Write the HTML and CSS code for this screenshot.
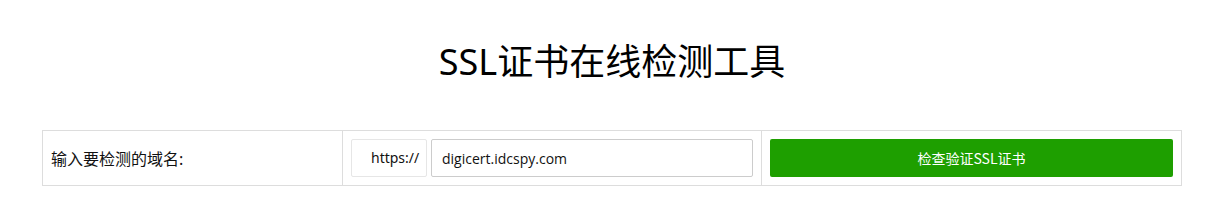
FILE: index.html
```html
<!DOCTYPE html>
<html lang="zh-CN">
<head>
    <meta charset="UTF-8">
    <title>SSL证书在线检测工具</title>
    <link rel="stylesheet" href="styles.css">
</head>
<body>
    <div class="container">
        <h1 class="title">SSL证书在线检测工具</h1>
        <table class="check-table">
            <tr>
                <td class="label-cell">输入要检测的域名:</td>
                <td class="input-cell">
                    <div class="input-group">
                        <span class="prefix">https://</span>
                        <input type="text" class="domain-input" value="digicert.idcspy.com">
                    </div>
                </td>
                <td class="btn-cell">
                    <button class="check-btn">检查验证SSL证书</button>
                </td>
            </tr>
        </table>
    </div>
</body>
</html>
```

FILE: styles.css
```css
body {
    margin: 0;
    padding-left: 14px;
    font-family: "Noto Sans", "Noto Sans CJK SC", sans-serif;
    font-size: 14px;
    color: #333;
    background: #fff;
}

.container {
    width: 1140px;
    margin: 0 auto;
}

.title {
    margin: 42px 0 48px;
    font-size: 36px;
    font-weight: normal;
    line-height: 40px;
    text-align: center;
    color: #000;
}

.check-table {
    width: 100%;
    border-collapse: collapse;
}

.check-table td {
    border: 1px solid #ddd;
    padding: 8px;
    height: 38px;
    vertical-align: middle;
}

.label-cell {
    width: 283px;
    font-size: 16px;
    color: #111;
}

.input-cell {
    width: 402px;
}

.input-group {
    display: flex;
    gap: 4px;
}

.prefix {
    box-sizing: border-box;
    width: 76px;
    height: 38px;
    line-height: 36px;
    border: 1px solid #e6e6e6;
    border-radius: 2px;
    padding: 0 9px 0 19px;
    color: #111;
}

.domain-input {
    box-sizing: border-box;
    flex: 1;
    height: 38px;
    border: 1px solid #ccc;
    border-radius: 2px;
    padding: 0 10px;
    font-family: "Open Sans", "Noto Sans CJK SC", sans-serif;
    font-size: 14px;
    color: #111;
    outline: none;
}

.check-btn {
    width: 100%;
    height: 38px;
    border: none;
    border-radius: 2px;
    background: #1e9f00;
    color: #fff;
    font-family: "Noto Sans CJK SC", sans-serif;
    font-size: 14px;
    cursor: pointer;
}
```
